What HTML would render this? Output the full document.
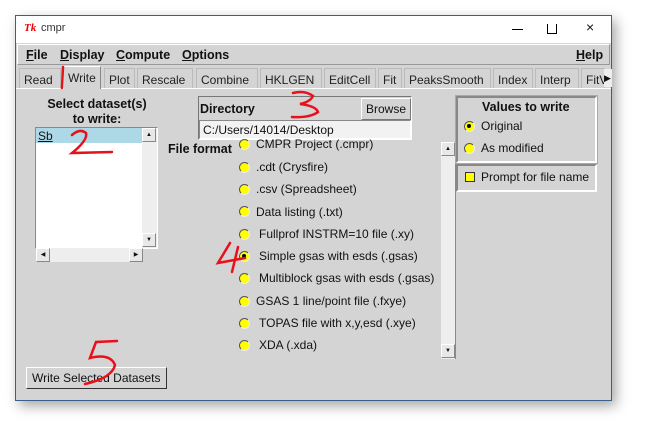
<!DOCTYPE html>
<html><head><meta charset="utf-8"><style>
*{margin:0;padding:0;box-sizing:border-box}
body{width:649px;height:439px;background:#fff;font-family:"Liberation Sans",Arial,sans-serif;font-size:12px;color:#111;position:relative;overflow:hidden}
.a{position:absolute;white-space:nowrap}
.win{position:absolute;left:15px;top:15px;width:597px;height:386px;border:1px solid #3a5f8a;background:#d4d4d4;box-shadow:4px 5px 12px rgba(0,0,0,.35)}
.title{position:absolute;left:0;top:0;width:595px;height:27px;background:#fff}
.menu{position:absolute;left:1px;top:28px;width:593px;height:21px;border:1px solid #999;border-top-color:#fff;border-left-color:#fff;font-weight:bold;font-size:12.5px}
.tab{position:absolute;top:52px;height:20px;border:1px solid #bbb;border-bottom:none;background:#d4d4d4;font-size:12px;padding:4px 0 0 4px;color:#222}
.sunk{border:1px solid;border-color:#888 #fff #fff #888}
.rais{border:1px solid;border-color:#fff #777 #777 #fff}
.rad{position:absolute;width:11px;height:11px;border-radius:50%;background:#ff0;border:1.5px solid #555;border-right-color:#eee;border-bottom-color:#eee}
.rad.on::after{content:"";position:absolute;left:2px;top:2px;width:4px;height:4px;background:#000;border-radius:50%}
.sb{position:absolute;background:#eee}
.arr{position:absolute;width:14px;height:14px;background:#e8e8e8;border:1px solid;border-color:#fff #888 #888 #fff;font-size:6px;text-align:center;line-height:12px}
</style></head><body>
<div class="win">
 <div class="title"></div>
 <div class="a" style="left:8px;top:6px;color:#e00;font-weight:bold;font-style:italic;font-size:11px;font-family:'Liberation Serif',serif">Tk</div>
 <div class="a" style="left:25px;top:6px;font-size:11px;color:#333">cmpr</div>
 <div class="a" style="left:496px;top:13px;width:11px;height:1px;background:#000"></div>
 <div class="a" style="left:531px;top:8px;width:10px;height:10px;border:1px solid #000;border-top:none"></div>
 <div class="a" style="left:570px;top:3px;font-size:14px">×</div>
 <div class="menu">
  <span class="a" style="left:8px;top:3px"><u>F</u>ile</span>
  <span class="a" style="left:42px;top:3px"><u>D</u>isplay</span>
  <span class="a" style="left:98px;top:3px"><u>C</u>ompute</span>
  <span class="a" style="left:164px;top:3px"><u>O</u>ptions</span>
  <span class="a" style="left:558px;top:3px"><u>H</u>elp</span>
 </div>
 <div class="a" style="left:0;top:72px;width:595px;height:1px;background:#fff"></div>
 <div class="tab" style="left:3px;width:42px">Read</div>
 <div class="tab" style="left:47px;top:50px;height:23px;width:38px;border-color:#fff #888 #888 #fff;border-bottom:none">Write</div>
 <div class="tab" style="left:88px;width:31px">Plot</div>
 <div class="tab" style="left:121px;width:56px">Rescale</div>
 <div class="tab" style="left:180px;width:62px">Combine</div>
 <div class="tab" style="left:244px;width:62px">HKLGEN</div>
 <div class="tab" style="left:308px;width:52px">EditCell</div>
 <div class="tab" style="left:362px;width:24px">Fit</div>
 <div class="tab" style="left:388px;width:87px">PeaksSmooth</div>
 <div class="tab" style="left:477px;width:40px">Index</div>
 <div class="tab" style="left:519px;width:44px">Interp</div>
 <div class="tab" style="left:565px;width:24px;overflow:hidden">FitV</div>
 <div class="a" style="left:588px;top:53px;width:8px;height:18px;background:#eee;font-size:9px;line-height:18px">▶</div>
</div>
<div class="a" style="left:47px;top:97px;font-weight:bold;font-size:12.5px;text-align:center;width:100px;line-height:15px">Select dataset(s)<br>to write:</div>
<div class="a sunk" style="left:35px;top:127px;width:123px;height:122px;background:#fff"></div>
<div class="a" style="left:36px;top:128px;width:106px;height:15px;background:#add8e6"></div>
<div class="a" style="left:38px;top:129px;text-decoration:underline">Sb</div>
<div class="sb" style="left:142px;top:128px;width:15px;height:120px"></div>
<div class="arr" style="left:142px;top:128px">▲</div>
<div class="arr" style="left:142px;top:233px">▼</div>
<div class="sb" style="left:36px;top:248px;width:107px;height:14px"></div>
<div class="arr" style="left:36px;top:248px">◀</div>
<div class="arr" style="left:129px;top:248px">▶</div>

<div class="a" style="left:198px;top:96px;width:214px;height:44px;border:1px solid;border-color:#777 #fff #fff #777"></div>
<div class="a" style="left:200px;top:102px;font-weight:bold;font-size:12.5px">Directory</div>
<div class="a rais" style="left:361px;top:98px;width:50px;height:22px;padding:3px 0 0 4px">Browse</div>
<div class="a sunk" style="left:199px;top:120px;width:212px;height:19px;background:#f2f2f2;padding:2px 0 0 3px">C:/Users/14014/Desktop</div>

<div class="a" style="left:168px;top:142px;font-weight:bold;font-size:12.5px">File format</div>
<div class="rad" style="left:239px;top:139px"></div><div class="a" style="left:256px;top:137px">CMPR Project (.cmpr)</div>
<div class="rad" style="left:239px;top:162px"></div><div class="a" style="left:256px;top:160px">.cdt (Crysfire)</div>
<div class="rad" style="left:239px;top:184px"></div><div class="a" style="left:256px;top:182px">.csv (Spreadsheet)</div>
<div class="rad" style="left:239px;top:206px"></div><div class="a" style="left:256px;top:205px">Data listing (.txt)</div>
<div class="rad" style="left:239px;top:229px"></div><div class="a" style="left:259px;top:227px">Fullprof INSTRM=10 file (.xy)</div>
<div class="rad on" style="left:239px;top:251px"></div><div class="a" style="left:259px;top:249px">Simple gsas with esds (.gsas)</div>
<div class="rad" style="left:239px;top:273px"></div><div class="a" style="left:259px;top:271px">Multiblock gsas with esds (.gsas)</div>
<div class="rad" style="left:239px;top:296px"></div><div class="a" style="left:256px;top:294px">GSAS 1 line/point file (.fxye)</div>
<div class="rad" style="left:239px;top:318px"></div><div class="a" style="left:259px;top:316px">TOPAS file with x,y,esd (.xye)</div>
<div class="rad" style="left:239px;top:340px"></div><div class="a" style="left:259px;top:338px">XDA (.xda)</div>
<div class="sb" style="left:441px;top:142px;width:15px;height:217px;border-right:1px solid #888"></div>
<div class="arr" style="left:441px;top:142px">▲</div>
<div class="arr" style="left:441px;top:344px">▼</div>

<div class="a" style="left:456px;top:96px;width:141px;height:67px;border:2px solid;border-color:#888 #fff #fff #888;outline:1px solid #aaa"></div>
<div class="a" style="left:482px;top:100px;font-weight:bold;font-size:12.5px">Values to write</div>
<div class="rad on" style="left:464px;top:121px"></div><div class="a" style="left:481px;top:119px">Original</div>
<div class="rad" style="left:464px;top:143px"></div><div class="a" style="left:481px;top:141px">As modified</div>
<div class="a" style="left:456px;top:164px;width:141px;height:28px;border:2px solid;border-color:#888 #fff #fff #888"></div>
<div class="a" style="left:465px;top:172px;width:10px;height:10px;background:#ff0;border:1px solid #333"></div>
<div class="a" style="left:481px;top:170px">Prompt for file name</div>

<div class="a rais" style="left:26px;top:367px;width:141px;height:22px;padding:3px 0 0 5px;border-right-color:#333;border-bottom-color:#333">Write Selected Datasets</div>

<svg class="a" style="left:0;top:0" width="649" height="439" fill="none" stroke="#e8101a" stroke-width="2.5" stroke-linecap="round">
<path d="M63 67 L62 88"/>
<path d="M72 135 Q80 128 86 133 Q88 140 72 153 L112 152"/>
<path d="M293 93 Q305 90 313 96 Q310 102 300 104 Q316 106 318 112 Q310 118 292 117"/>
<path d="M230 243 L218 263 L245 258 M238 247 L232 272"/>
<path d="M117 341 L96 342 L90 358 Q110 353 115 365 Q112 378 85 384"/>
</svg>
</body></html>
